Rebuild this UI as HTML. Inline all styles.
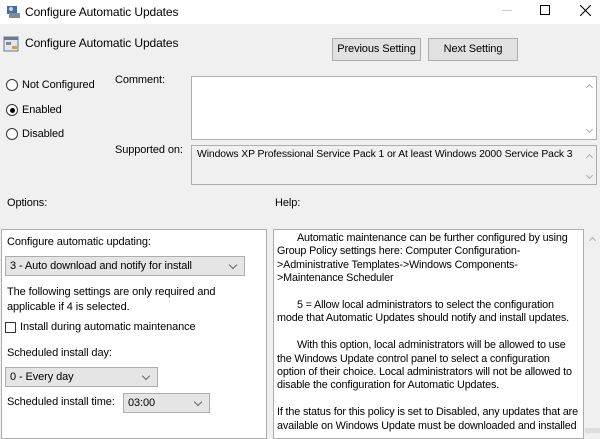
<!DOCTYPE html>
<html><head><style>
*{box-sizing:border-box;margin:0;padding:0}
body{width:600px;height:433px;overflow:hidden;background:#f0f0f0;font-family:"Liberation Sans",sans-serif;font-size:11px;letter-spacing:-0.1px;color:#000;position:relative}
.a{position:absolute;white-space:nowrap}
.box{position:absolute;border:1px solid #adadad;background:#fff}
.btn{position:absolute;border:1px solid #adadad;background:#e1e1e1;text-align:center;line-height:21px;white-space:nowrap}
.rad{position:absolute;width:12px;height:12px;border:1px solid #333;border-radius:50%;background:#fff}
.dd{position:absolute;border:1px solid #adadad;background:#e5e5e5;padding-left:4px;line-height:18px;white-space:nowrap}
.dd:after{content:"";position:absolute;right:8px;top:5px;width:5px;height:5px;border-right:1px solid #666;border-bottom:1px solid #666;transform:rotate(45deg)}
.up,.dn{position:absolute;width:5px;height:5px;border-left:1px solid #aaa;border-top:1px solid #aaa}
.up{transform:rotate(45deg)}.dn{transform:rotate(225deg)}
</style></head><body>
<div class="a" style="left:0;top:0;width:600px;height:24px;background:#fff"></div>
<svg class="a" style="left:5px;top:4px" width="16" height="16"><rect x="2" y="2" width="10" height="8" fill="#3a6fb0"/><rect x="4" y="9" width="11" height="5" fill="#8a8a8a"/><circle cx="6" cy="5" r="2" fill="#e8d0a0"/></svg>
<div class="a" style="left:25px;top:5px;font-size:12px">Configure Automatic Updates</div>
<div class="a" style="left:502px;top:10px;width:10px;height:1px;background:#ccc"></div>
<div class="a" style="left:540px;top:5px;width:10px;height:10px;border:1px solid #000"></div>
<svg class="a" style="left:580px;top:5px" width="11" height="11"><path d="M0 0L11 11M11 0L0 11" stroke="#000" stroke-width="1.1"/></svg>
<svg class="a" style="left:3px;top:36px" width="16" height="16"><rect x="1" y="1" width="14" height="14" fill="#dfe6ee" stroke="#6a7b90"/><rect x="1" y="1" width="14" height="3" fill="#6a7b90"/><rect x="3" y="6" width="5" height="3" fill="#888"/><rect x="9" y="10" width="5" height="3" fill="#c9a060"/></svg>
<div class="a" style="left:25px;top:36px;font-size:12px">Configure Automatic Updates</div>
<div class="btn" style="left:332px;top:38px;width:89px;height:23px">Previous Setting</div>
<div class="btn" style="left:428px;top:38px;width:90px;height:23px">Next Setting</div>
<div class="rad" style="left:6px;top:79px"></div><div class="a" style="left:22px;top:79px">Not Configured</div>
<div class="rad" style="left:6px;top:104px"></div><div class="a" style="left:10px;top:108px;width:5px;height:5px;border-radius:50%;background:#000"></div><div class="a" style="left:22px;top:104px">Enabled</div>
<div class="rad" style="left:6px;top:128px"></div><div class="a" style="left:22px;top:128px">Disabled</div>
<div class="a" style="left:115px;top:74px">Comment:</div>
<div class="a" style="left:115px;top:144px">Supported on:</div>
<div class="box" style="left:191px;top:76px;width:406px;height:64px"></div>
<div class="up" style="left:587px;top:85px"></div><div class="dn" style="left:587px;top:127px"></div>
<div class="box" style="left:191px;top:145px;width:406px;height:40px;background:#f0f0f0"></div>
<div class="a" style="left:197px;top:149px;font-size:10.4px">Windows XP Professional Service Pack 1 or At least Windows 2000 Service Pack 3</div>
<div class="up" style="left:587px;top:155px"></div><div class="dn" style="left:587px;top:173px"></div>
<div class="a" style="left:7px;top:197px">Options:</div>
<div class="a" style="left:275px;top:197px">Help:</div>
<div class="box" style="left:1px;top:229px;width:266px;height:210px"></div>
<div class="a" style="left:7px;top:236px">Configure automatic updating:</div>
<div class="dd" style="left:5px;top:256px;width:240px;height:20px">3 - Auto download and notify for install</div>
<div class="a" style="left:7px;top:285px;line-height:15px">The following settings are only required and<br>applicable if 4 is selected.</div>
<div class="a" style="left:5px;top:322px;width:11px;height:11px;border:1px solid #333;background:#fff"></div>
<div class="a" style="left:20px;top:321px">Install during automatic maintenance</div>
<div class="a" style="left:7px;top:347px">Scheduled install day:</div>
<div class="dd" style="left:5px;top:367px;width:153px;height:20px">0 - Every day</div>
<div class="a" style="left:7px;top:396px">Scheduled install time:</div>
<div class="dd" style="left:123px;top:393px;width:87px;height:20px">03:00</div>
<div class="box" style="left:273px;top:229px;width:311px;height:210px"></div>
<div class="a" style="left:585px;top:229px;width:15px;height:210px;background:#f0f0f0"></div>
<div class="up" style="left:590px;top:238px"></div>
<div class="a" style="left:585px;top:428px;width:15px;height:5px;background:#ddd"></div>
<div class="a" style="left:277px;top:232px;line-height:13.4px;font-size:10.8px;letter-spacing:-0.15px">
<div>&nbsp;&nbsp;&nbsp;&nbsp;&nbsp;&nbsp;&nbsp;Automatic maintenance can be further configured by using</div>
<div>Group Policy settings here: Computer Configuration-</div>
<div>&gt;Administrative Templates-&gt;Windows Components-</div>
<div>&gt;Maintenance Scheduler</div><div>&nbsp;</div>
<div>&nbsp;&nbsp;&nbsp;&nbsp;&nbsp;&nbsp;&nbsp;5 = Allow local administrators to select the configuration</div>
<div>mode that Automatic Updates should notify and install updates.</div><div>&nbsp;</div>
<div>&nbsp;&nbsp;&nbsp;&nbsp;&nbsp;&nbsp;&nbsp;With this option, local administrators will be allowed to use</div>
<div>the Windows Update control panel to select a configuration</div>
<div>option of their choice. Local administrators will not be allowed to</div>
<div>disable the configuration for Automatic Updates.</div><div>&nbsp;</div>
<div>If the status for this policy is set to Disabled, any updates that are</div>
<div>available on Windows Update must be downloaded and installed</div>
</div>
</body></html>
